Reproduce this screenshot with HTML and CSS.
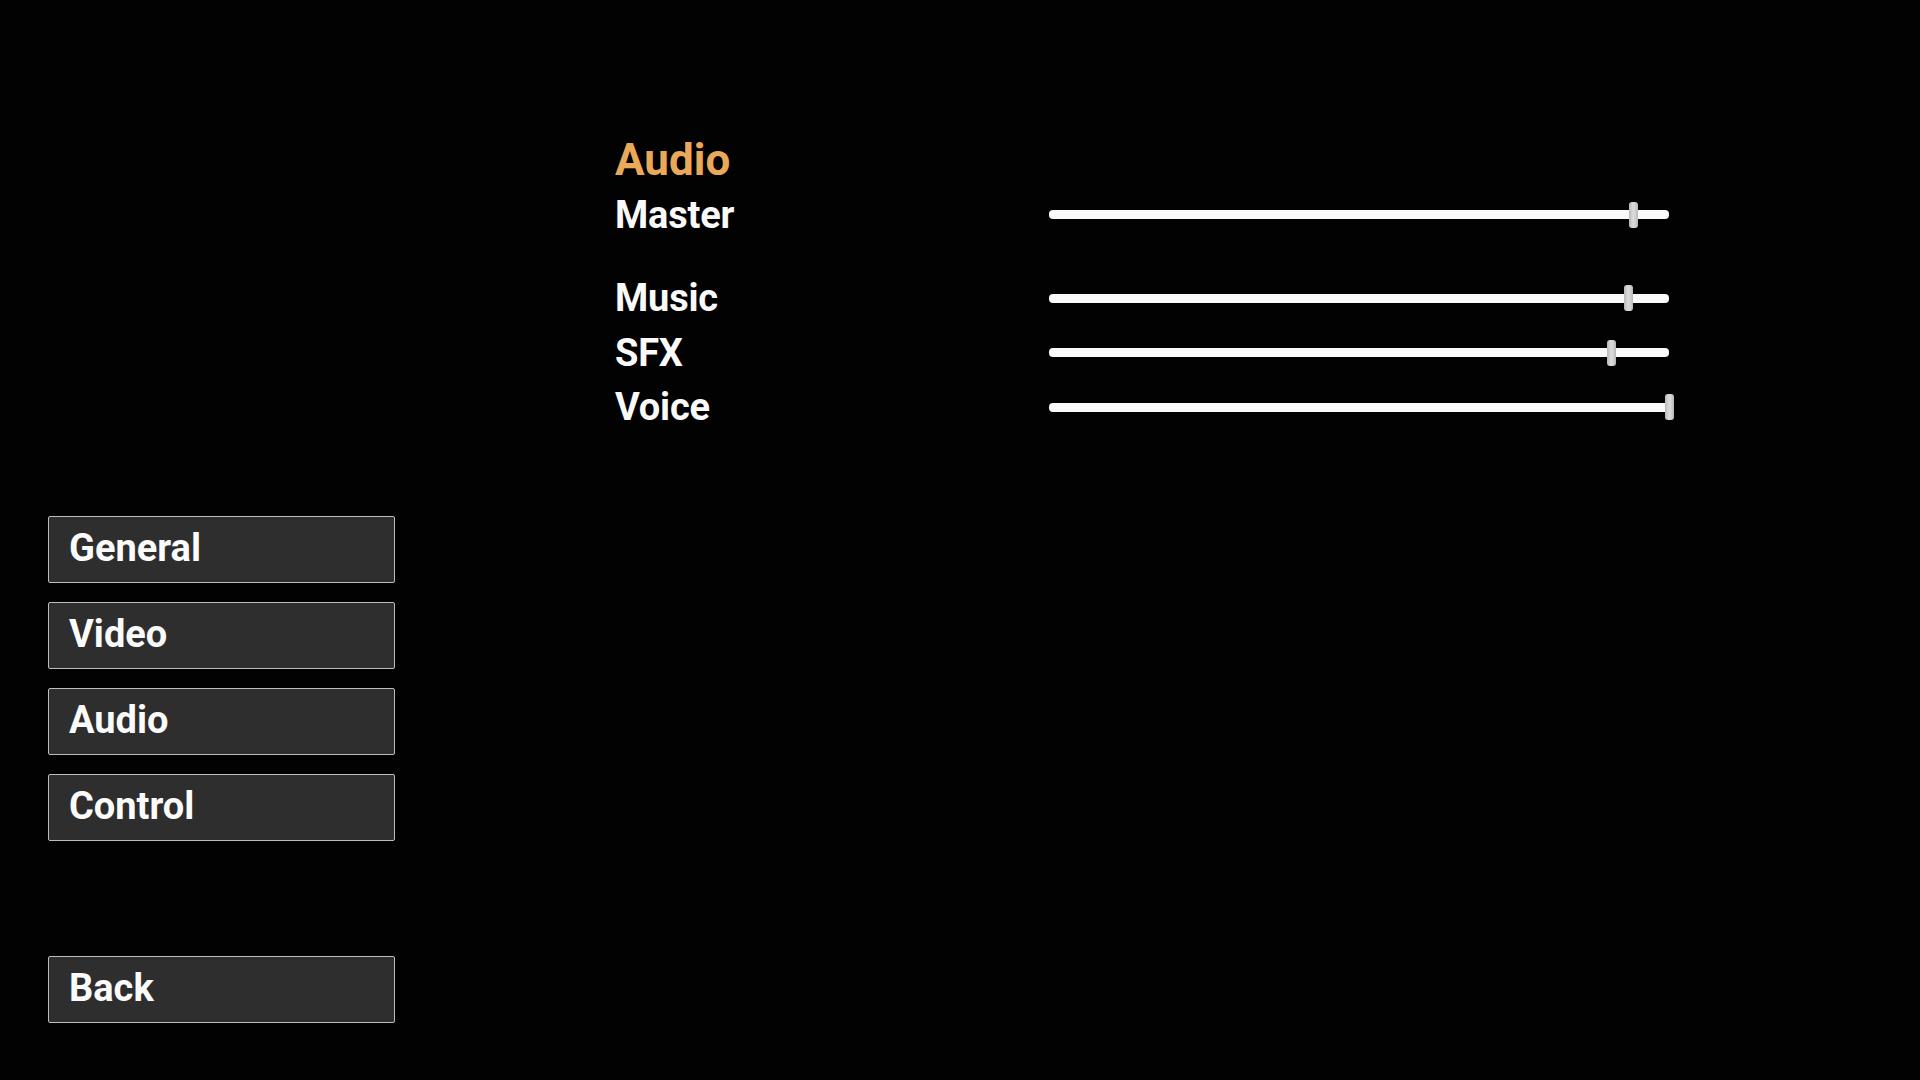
FILE: index.html
```html
<!DOCTYPE html>
<html lang="en">
<head>
<meta charset="utf-8">
<title>Settings - Audio</title>
<link rel="stylesheet" href="styles.css">
</head>
<body>
<div class="screen">
  <nav class="nav">
    <div class="nav-group">
      <div class="btn">General</div>
      <div class="btn">Video</div>
      <div class="btn">Audio</div>
      <div class="btn">Control</div>
    </div>
    <div class="btn back">Back</div>
  </nav>
  <main class="panel">
    <h1 class="title">Audio</h1>
    <div class="row row-master">
      <div class="label">Master</div>
      <div class="slider"><div class="track"></div><div class="thumb" style="left: 94.2%"></div></div>
    </div>
    <div class="row">
      <div class="label">Music</div>
      <div class="slider"><div class="track"></div><div class="thumb" style="left: 93.5%"></div></div>
    </div>
    <div class="row">
      <div class="label">SFX</div>
      <div class="slider"><div class="track"></div><div class="thumb" style="left: 90.8%"></div></div>
    </div>
    <div class="row">
      <div class="label">Voice</div>
      <div class="slider"><div class="track"></div><div class="thumb" style="left: 100%"></div></div>
    </div>
  </main>
</div>
</body>
</html>
```

FILE: styles.css
```css
* { box-sizing: border-box; }

html, body {
  margin: 0;
  padding: 0;
  background: #020202;
}

body {
  width: 1920px;
  height: 1080px;
  overflow: hidden;
  font-family: Roboto, "Liberation Sans", sans-serif;
  font-weight: 700;
  color: #fafafa;
}

.screen {
  display: flex;
  height: 100%;
}

.nav {
  width: 395px;
  padding: 516px 0 0 48px;
  display: flex;
  flex-direction: column;
}

.nav-group {
  display: flex;
  flex-direction: column;
  gap: 19px;
}

.btn {
  width: 347px;
  height: 67px;
  line-height: 62px;
  padding: 0 0 3px 20px;
  font-size: 38px;
  color: #fbfbfb;
  background: #2e2e2e;
  border: 1px solid #bdbdbd;
  border-radius: 2px;
}

.back {
  margin-top: 115px;
}

.panel {
  padding: 133px 0 0 220px;
}

.title {
  margin: 0;
  height: 54.5px;
  line-height: 54.5px;
  font-size: 44px;
  font-weight: 700;
  color: #eaa958;
}

.row {
  display: flex;
  align-items: center;
  height: 54.5px;
}

.row-master {
  margin-bottom: 29px;
}

.label {
  width: 434px;
  font-size: 38px;
  line-height: 54.5px;
  letter-spacing: -0.2px;
}

.slider {
  position: relative;
  width: 620px;
  height: 26px;
  display: flex;
  align-items: center;
}

.track {
  width: 100%;
  height: 9px;
  background: #fbfbfb;
  border-radius: 4px;
}

.thumb {
  position: absolute;
  top: 0;
  width: 9px;
  height: 26px;
  margin-left: -4.5px;
  border-radius: 3px;
  background: linear-gradient(90deg, #b9b9b9 0%, #dcdcdc 45%, #d2d2d2 70%, #b5b5b5 100%);
}
```
